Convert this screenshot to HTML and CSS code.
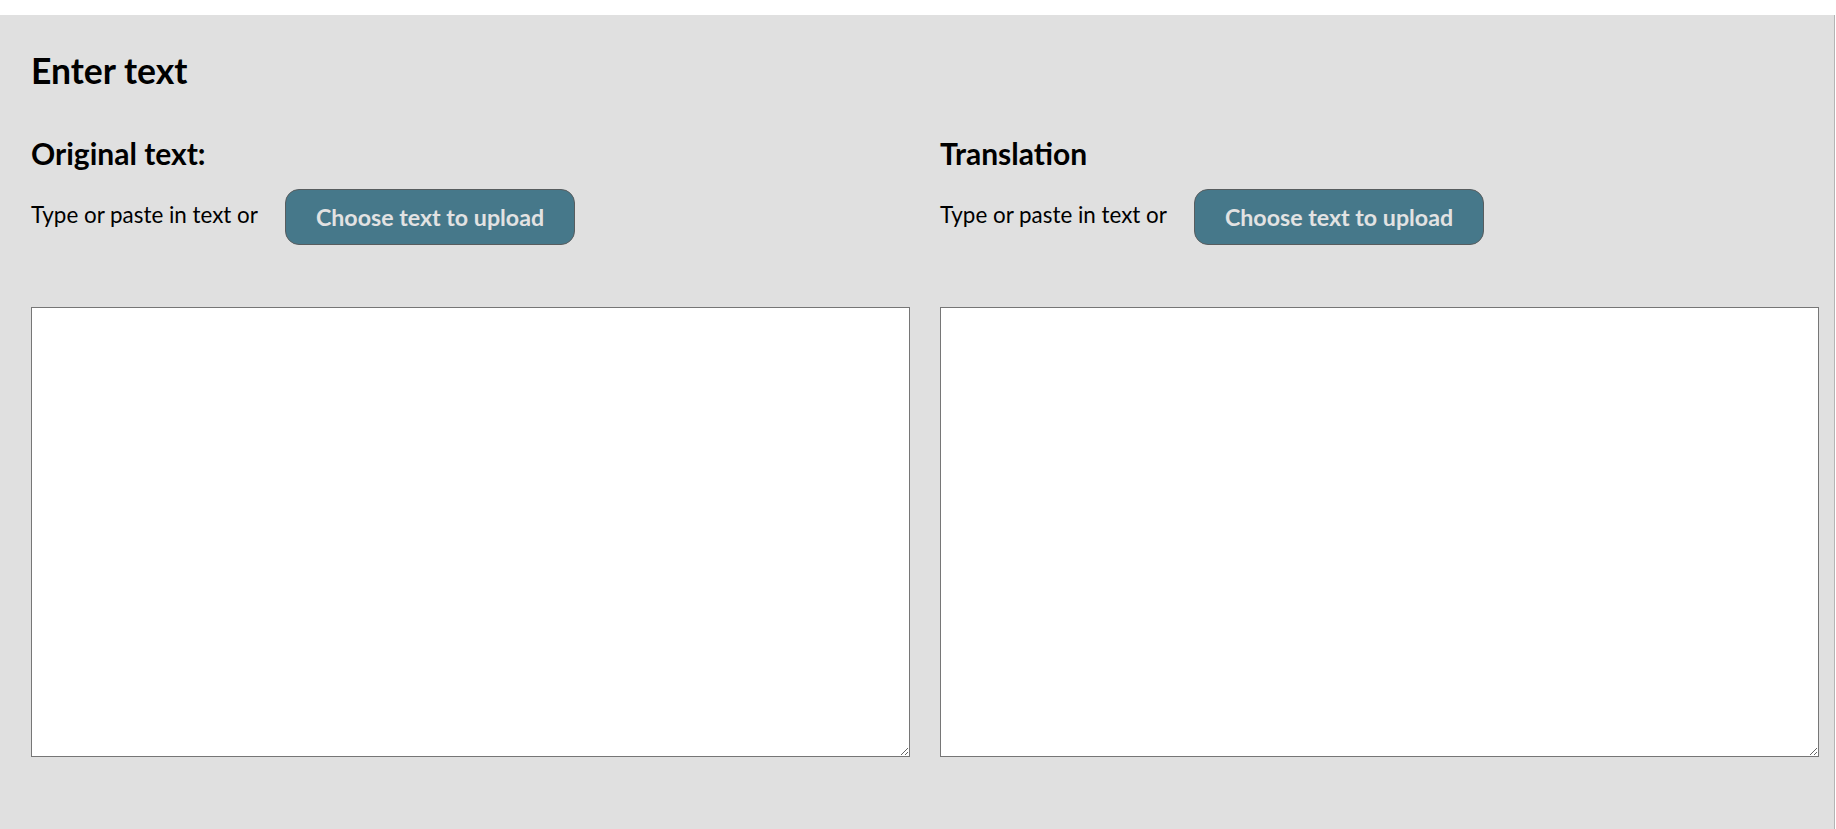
FILE: index.html
```html
<!DOCTYPE html>
<html lang="en">
<head>
<meta charset="utf-8">
<title>Enter text</title>
<link rel="stylesheet" href="styles.css">
</head>
<body>
<main class="panel">
  <h1 class="title">Enter text</h1>
  <div class="columns">
    <section class="col">
      <h2 class="col-title">Original text:</h2>
      <div class="upload-row">
        <span class="hint">Type or paste in text or</span>
        <button class="upload-btn" type="button">Choose text to upload</button>
      </div>
      <textarea class="text-box" aria-label="Original text"></textarea>
    </section>
    <section class="col">
      <h2 class="col-title">Translation</h2>
      <div class="upload-row">
        <span class="hint">Type or paste in text or</span>
        <button class="upload-btn" type="button">Choose text to upload</button>
      </div>
      <textarea class="text-box" aria-label="Translation"></textarea>
    </section>
  </div>
</main>
</body>
</html>
```

FILE: styles.css
```css
html, body {
  margin: 0;
  padding: 0;
  background: #ffffff;
}

body {
  font-family: Lato, "Liberation Sans", sans-serif;
  color: #000;
  font-size: 22.4px;
}

.panel {
  margin-top: 15px;
  width: calc(100% - 1px);
  min-height: calc(100vh - 15px);
  box-sizing: border-box;
  background: #e0e0e0;
  border-right: 1px solid #b4b4b4;
  padding: 35px 15px 40px 31px;
}

.title {
  margin: 0;
  font-size: 35.5px;
  line-height: 1.2;
  font-weight: 700;
}

.columns {
  display: grid;
  grid-template-columns: 1fr 1fr;
  column-gap: 30px;
  margin-top: 42px;
}

.col {
  display: flex;
  flex-direction: column;
  min-width: 0;
}

.col-title {
  margin: 0;
  font-size: 30px;
  line-height: 1.2;
  font-weight: 700;
}

.upload-row {
  display: flex;
  align-items: center;
  gap: 27px;
  margin-top: 18px;
}

.hint {
  line-height: 1.2;
  margin-top: -2px;
}

.upload-btn {
  height: 56px;
  padding: 0 30px;
  border: 1px solid #585d5f;
  border-radius: 14px;
  background: #46788a;
  color: #e2e2e2;
  font-family: inherit;
  font-size: 23.2px;
  font-weight: 700;
  cursor: pointer;
}

.text-box {
  margin-top: 62px;
  width: 100%;
  height: 450px;
  box-sizing: border-box;
  border: 1px solid #767676;
  background: #fff;
  padding: 2px;
  font-family: inherit;
  font-size: 20px;
}
```
